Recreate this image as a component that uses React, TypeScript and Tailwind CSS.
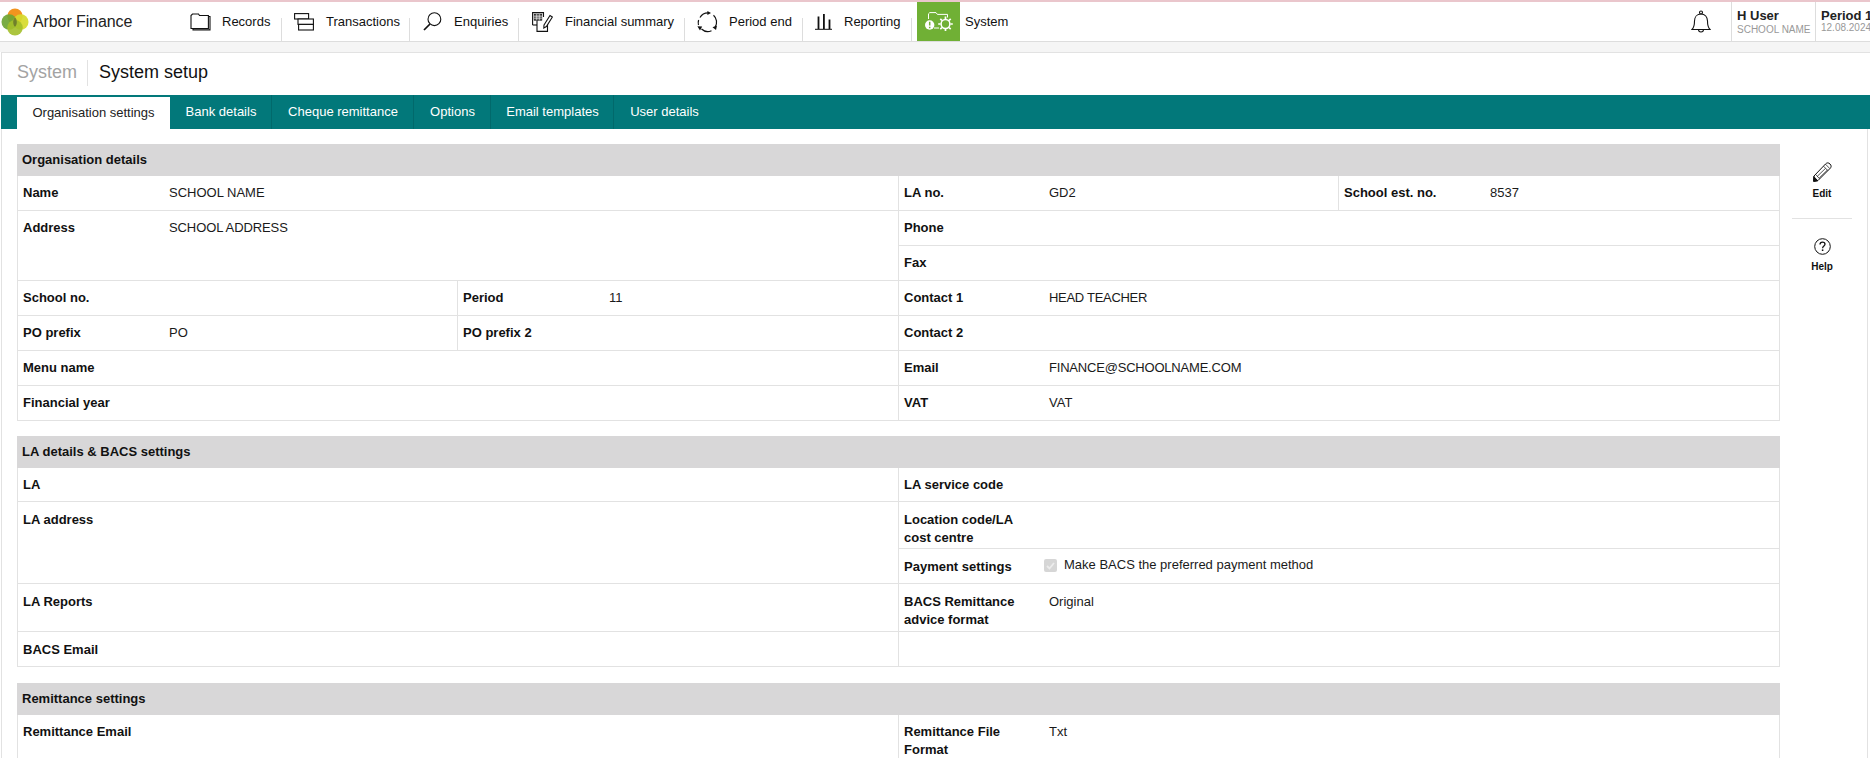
import React from "react";

const stroke = { fill: "none", stroke: "#111", strokeWidth: 1.1 } as const;

function RecordsIcon() {
  return (
    <svg width="21" height="18" viewBox="0 0 21 18" {...stroke}>
      <path d="M3 15.5V16.9H20V3.5H18.4" />
      <path d="M1 15.5H18.4V2.5H9.5L8.5 1H2.5L1 2.5Z" fill="#fff" />
    </svg>
  );
}
function TransactionsIcon() {
  return (
    <svg width="20" height="18" viewBox="0 0 20 18" {...stroke}>
      <rect x="0.6" y="0.6" width="14" height="5.4" />
      <rect x="4" y="6" width="15.4" height="5.4" fill="#fff" />
      <rect x="4.6" y="11.4" width="14.8" height="5.6" fill="#fff" />
    </svg>
  );
}
function EnquiriesIcon() {
  return (
    <svg width="19" height="19" viewBox="0 0 19 19" {...stroke}>
      <circle cx="11.4" cy="7.2" r="6.4" />
      <path d="M7 12L1 18" strokeWidth="1.7" />
    </svg>
  );
}
function SummaryIcon() {
  return (
    <svg width="21" height="20" viewBox="0 0 21 20" {...stroke}>
      <path d="M0.6 13V0.6H11.5V5" />
      <path d="M0.6 13H5" />
      <path d="M5 7V19.4H15.5V10" fill="#fff" />
      <rect x="2.2" y="2.2" width="7.6" height="6" fill="#555" stroke="#111" strokeWidth="0.7" />
      <path d="M2 4.2H10M2 6.2H10M4.7 2V8.4M7.3 2V8.4" stroke="#fff" strokeWidth="0.6" />
      <path d="M12 13L18 3.5L20.4 5L14.4 14.6L11.8 16Z" fill="#fff" />
    </svg>
  );
}
function PeriodIcon() {
  return (
    <svg width="21" height="22" viewBox="0 0 21 22" {...stroke} strokeWidth={1.2}>
      <path d="M3 6.5A9.2 9.2 0 0 1 11 1.8" />
      <path d="M16.5 4.3A9.2 9.2 0 0 1 18.2 16" />
      <path d="M14.5 19.7A9.2 9.2 0 0 1 4.5 18" />
      <path d="M1.5 14A9.2 9.2 0 0 1 1.6 9" />
      <path d="M10.4 0L14 2L10.4 4Z" fill="#111" stroke="none" />
      <path d="M20 14.6L19 19L15.5 16.3Z" fill="#111" stroke="none" />
      <path d="M0.4 15.3L5.2 15.4L3 19.6Z" fill="#111" stroke="none" />
    </svg>
  );
}
function ReportingIcon() {
  return (
    <svg width="18" height="16" viewBox="0 0 18 16" fill="#111">
      <rect x="0" y="14.8" width="17" height="1" />
      <rect x="2.6" y="2.5" width="1.8" height="12.5" />
      <rect x="8" y="0" width="1.8" height="15" />
      <rect x="13.6" y="5.5" width="1.8" height="9.5" />
    </svg>
  );
}
function SystemIcon() {
  return (
    <svg width="28" height="19" viewBox="0 0 28 19" fill="none" stroke="#fff" strokeWidth="1">
      <path d="M3.5 7V1.8L4.8 0.6H11L12.4 2.4H22.5V5.5" />
      <path d="M9 16H14" />
      <circle cx="4.7" cy="13" r="4.7" fill="#fff" stroke="none" />
      <path d="M4.7 9.8V13.6M4.7 14.8V16.2" stroke="#70b035" strokeWidth="1.5" />
      <circle cx="20.5" cy="12" r="4.4" strokeWidth="1.5" />
      <path d="M20.5 4.6V7M20.5 17V19M13.2 12H15.6M25.4 12H27.8M15.3 6.8L17 8.5M24 15.5L25.7 17.2M15.3 17.2L17 15.5M24 8.5L25.7 6.8" strokeWidth="1.7" />
    </svg>
  );
}
function BellIcon() {
  return (
    <svg width="20" height="24" viewBox="0 0 20 24" fill="none" stroke="#111" strokeWidth="1.1">
      <path d="M1 19.5C3 17.5 3.5 15 3.5 11C3.5 7 6 4 10 4C14 4 16.5 7 16.5 11C16.5 15 17 17.5 19 19.5Z" />
      <circle cx="10" cy="2.5" r="1.5" />
      <path d="M7.5 19.5A2.5 2.5 0 0 0 12.5 19.5" />
    </svg>
  );
}
function PencilIcon() {
  return (
    <svg width="19" height="20" viewBox="0 0 19 20" fill="none" stroke="#111" strokeWidth="1">
      <path d="M1 14L12.5 2C14 0.5 15.5 0.5 17 2C18.5 3.5 18.5 5 17 6.5L5 18.5L0.8 19.2Z" />
      <path d="M2.6 12.4L6.6 16.8M10.5 4.2L14.8 8.6M12.5 2.2L16.8 6.6M4.3 14.3L12.6 6.3M6.2 16L14.4 8" strokeWidth="0.7" />
      <path d="M0.8 14.6L4.8 18.8L0.6 19.4Z" fill="#111" />
    </svg>
  );
}
function HelpIcon() {
  return (
    <svg width="17" height="17" viewBox="0 0 17 17" fill="none" stroke="#111" strokeWidth="1">
      <circle cx="8.5" cy="8.5" r="7.8" />
      <path d="M6 6.5C6 5 7 4.2 8.5 4.2C10 4.2 11 5.1 11 6.3C11 8 8.6 8 8.6 10.2" strokeWidth="1.3" />
      <path d="M8.6 11.4V13" strokeWidth="1.5" />
    </svg>
  );
}
function Logo() {
  return (
    <svg width="28" height="28" viewBox="0 0 29 29">
      <circle cx="14.5" cy="8.5" r="8" fill="#f2941f" />
      <circle cx="8.5" cy="14.5" r="8" fill="#6ea534" fillOpacity="0.92" />
      <circle cx="20.5" cy="14.5" r="8" fill="#d6da2c" fillOpacity="0.92" />
      <circle cx="14.5" cy="20.5" r="8" fill="#a3bf2a" fillOpacity="0.9" />
      <path d="M14.5 9.5C17 11.5 17 17.5 14.5 19.5C12 17.5 12 11.5 14.5 9.5Z" fill="#5d6a2c" fillOpacity="0.75" />
    </svg>
  );
}

const nav: { label: string; icon: React.ReactNode; iconW: string; textW: string; sep: string }[] = [
  { label: "Records", icon: <RecordsIcon />, iconW: "w-[32px]", textW: "w-[72px]", sep: "right-[12px]" },
  { label: "Transactions", icon: <TransactionsIcon />, iconW: "w-[32px]", textW: "w-[97px]", sep: "right-[13px]" },
  { label: "Enquiries", icon: <EnquiriesIcon />, iconW: "w-[31px]", textW: "w-[78px]", sep: "right-[13px]" },
  { label: "Financial summary", icon: <SummaryIcon />, iconW: "w-[33px]", textW: "w-[132px]", sep: "right-[12px]" },
  { label: "Period end", icon: <PeriodIcon />, iconW: "w-[32px]", textW: "w-[86px]", sep: "right-[12px]" },
  { label: "Reporting", icon: <ReportingIcon />, iconW: "w-[29px]", textW: "w-[73px]", sep: "right-[5px]" },
];

function Header() {
  return (
    <div className="flex h-[42px] items-stretch border-b border-[#dddddd] border-t-2 border-t-[#eac6cc] bg-white">
      <div className="flex w-[190px] items-center shrink-0 pl-px">
        <Logo />
        <span className="ml-[4px] text-[16px] font-light leading-none text-[#222] tracking-[-0.1px]">Arbor Finance</span>
      </div>
      {nav.map((n) => (
        <div key={n.label} className="relative flex items-center">
          <div className={`${n.iconW} flex items-center`}>{n.icon}</div>
          <span className={`${n.textW} text-[13px] text-[#111] whitespace-nowrap`}>{n.label}</span>
          <span className={`absolute bottom-0 top-[16px] w-px bg-[#dddddd] ${n.sep}`} />
        </div>
      ))}
      <div className="flex w-[43px] items-center justify-center bg-[#70b035]">
        <SystemIcon />
      </div>
      <span className="ml-[5px] self-center text-[13px] text-[#111]">System</span>
      <div className="ml-auto mr-[20px] flex items-center">
        <BellIcon />
      </div>
      <div className="flex h-[42px] w-[84px] flex-col border-l border-[#dddddd] pl-[5px] pt-[6px] shrink-0">
        <span className="text-[13px] font-bold leading-[15px] text-[#222]">H User</span>
        <span className="text-[10px] leading-[13px] text-[#999] whitespace-nowrap">SCHOOL NAME</span>
      </div>
      <div className="flex h-[42px] w-[55px] flex-col overflow-hidden border-l border-[#dddddd] pl-[5px] pt-[6px] shrink-0">
        <span className="text-[13px] font-bold leading-[15px] text-[#222] whitespace-nowrap">Period 11</span>
        <span className="text-[10px] leading-[9px] text-[#999] whitespace-nowrap">12.08.2024</span>
      </div>
    </div>
  );
}

const tabs: { label: string; cls: string }[] = [
  { label: "Bank details", cls: "w-[102px] border-r" },
  { label: "Cheque remittance", cls: "w-[142px] border-r" },
  { label: "Options", cls: "w-[77px] border-r" },
  { label: "Email templates", cls: "w-[123px] border-r" },
  { label: "User details", cls: "w-[100px]" },
];

function Tabs() {
  return (
    <div className="-ml-px flex h-[34px] items-end bg-[#02787a] pl-[16px]">
      <div className="flex h-[32px] w-[153px] items-center justify-center bg-white text-[13px] text-[#222]">Organisation settings</div>
      {tabs.map((t) => (
        <div key={t.label} className={`flex h-[34px] items-center justify-center border-[#01696b] pb-[1px] pl-[1px] text-[13px] text-white whitespace-nowrap ${t.cls}`}>
          {t.label}
        </div>
      ))}
    </div>
  );
}

function Cell({
  label,
  value,
  h,
  className = "",
  labelW = "w-[146px]",
  valueClass = "",
  pt = "pt-[8px]",
}: {
  label?: React.ReactNode;
  value?: string;
  h: string;
  className?: string;
  labelW?: string;
  valueClass?: string;
  pt?: string;
}) {
  return (
    <div className={`flex border-b border-[#e2e2e2] pl-[5px] leading-[18px] ${pt} ${h} ${className}`}>
      {label && <div className={`${labelW} shrink-0 font-bold text-[#111]`}>{label}</div>}
      {value && <div className={`text-[#1a1a1a] ${valueClass}`}>{value}</div>}
    </div>
  );
}

function Section({ title, children, className = "" }: { title: string; children: React.ReactNode; className?: string }) {
  return (
    <div className={className}>
      <div className="flex h-[32px] items-center bg-[#d8d7d8] pl-[5px] font-bold text-[#111]">{title}</div>
      <div className="flex border-x border-[#e2e2e2]">{children}</div>
    </div>
  );
}

function Sidebar() {
  return (
    <div className="flex w-[88px] shrink-0 flex-col items-center border-r border-[#e2e2e2] pr-[3px] pt-[33px]">
      <PencilIcon />
      <span className="mt-[5px] text-[10px] font-bold leading-[14px] text-[#111]">Edit</span>
      <div className="mt-[17px] mb-[19px] h-px w-[60px] bg-[#e2e2e2]" />
      <HelpIcon />
      <span className="mt-[5px] text-[10px] font-bold leading-[14px] text-[#111]">Help</span>
    </div>
  );
}

const rw = "w-[145px]";
const p9 = "pt-[9px]";

export default function App() {
  return (
    <div className="flex h-[758px] w-[1870px] flex-col overflow-hidden bg-white text-[13px] font-['Liberation_Sans',Arial,sans-serif]">
      <Header />
      <div className="h-[10px] shrink-0 bg-[#f5f5f5]" />
      <div className="ml-px flex min-h-0 flex-1 flex-col border-l border-t border-[#e2e2e2]">
        <div className="flex h-[42px] shrink-0 items-center pb-[3px] pl-[15px]">
          <span className="text-[18px] text-[#a3a3a3]">System</span>
          <span className="ml-[10px] mr-[11px] h-[26px] w-px bg-[#e2e2e2]" />
          <span className="text-[18px] text-[#111]">System setup</span>
        </div>
        <Tabs />
        <div className="flex min-h-0 flex-1">
          <div className="w-[1778px] shrink-0 pl-[15px] pt-[15px]">
            <Section title="Organisation details">
              <div className="w-[881px] shrink-0 border-r border-[#e2e2e2]">
                <Cell label="Name" value="SCHOOL NAME" h="h-[35px]" />
                <Cell label="Address" value="SCHOOL ADDRESS" valueClass="tracking-[-0.1px]" h="h-[70px]" />
                <div className="flex">
                  <Cell label="School no." h="h-[35px]" className="w-[440px] border-r" />
                  <Cell label="Period" value="11" h="h-[35px]" className="flex-1" />
                </div>
                <div className="flex">
                  <Cell label="PO prefix" value="PO" h="h-[35px]" className="w-[440px] border-r" />
                  <Cell label="PO prefix 2" h="h-[35px]" className="flex-1" />
                </div>
                <Cell label="Menu name" h="h-[35px]" />
                <Cell label="Financial year" h="h-[35px]" />
              </div>
              <div className="min-w-0 flex-1">
                <div className="flex">
                  <Cell label="LA no." value="GD2" labelW={rw} h="h-[35px]" className="w-[440px] border-r" />
                  <Cell label="School est. no." value="8537" h="h-[35px]" className="flex-1" />
                </div>
                <Cell label="Phone" labelW={rw} h="h-[35px]" />
                <Cell label="Fax" labelW={rw} h="h-[35px]" />
                <Cell label="Contact 1" value="HEAD TEACHER" labelW={rw} valueClass="tracking-[-0.3px]" h="h-[35px]" />
                <Cell label="Contact 2" labelW={rw} h="h-[35px]" />
                <Cell label="Email" value="FINANCE@SCHOOLNAME.COM" labelW={rw} valueClass="tracking-[-0.2px]" h="h-[35px]" />
                <Cell label="VAT" value="VAT" labelW={rw} h="h-[35px]" />
              </div>
            </Section>
            <Section title="LA details &amp; BACS settings" className="mt-[15px]">
              <div className="w-[881px] shrink-0 border-r border-[#e2e2e2]">
                <Cell label="LA" h="h-[34px]" />
                <Cell label="LA address" pt={p9} h="h-[82px]" />
                <Cell label="LA Reports" pt={p9} h="h-[48px]" />
                <Cell label="BACS Email" pt={p9} h="h-[35px]" />
              </div>
              <div className="min-w-0 flex-1">
                <Cell label="LA service code" labelW={rw} h="h-[34px]" />
                <Cell label={<>Location code/LA<br />cost centre</>} labelW={rw} pt={p9} h="h-[47px]" />
                <div className="flex h-[35px] border-b border-[#e2e2e2] pl-[5px] pt-[9px] leading-[18px]">
                  <div className="w-[140px] shrink-0 font-bold text-[#111]">Payment settings</div>
                  <div className="flex h-[16px] items-start">
                    <span className="mt-[1px] flex h-[13px] w-[13px] items-center justify-center rounded-[2px] bg-[#d6d6d6]">
                      <svg width="9" height="8" viewBox="0 0 9 8" fill="none" stroke="#ececec" strokeWidth="1.8">
                        <path d="M1 4L3.5 6.5L8 1" />
                      </svg>
                    </span>
                    <span className="ml-[7px] -mt-[2px] text-[#1a1a1a]">Make BACS the preferred payment method</span>
                  </div>
                </div>
                <Cell label={<>BACS Remittance<br />advice format</>} value="Original" labelW={rw} pt={p9} h="h-[48px]" />
                <div className="h-[35px] border-b border-[#e2e2e2]" />
              </div>
            </Section>
            <Section title="Remittance settings" className="mt-[16px]">
              <div className="w-[881px] shrink-0 border-r border-[#e2e2e2]">
                <Cell label="Remittance Email" h="h-[48px]" />
              </div>
              <div className="min-w-0 flex-1">
                <Cell label={<>Remittance File<br />Format</>} value="Txt" labelW={rw} h="h-[48px]" />
              </div>
            </Section>
          </div>
          <Sidebar />
        </div>
      </div>
    </div>
  );
}
